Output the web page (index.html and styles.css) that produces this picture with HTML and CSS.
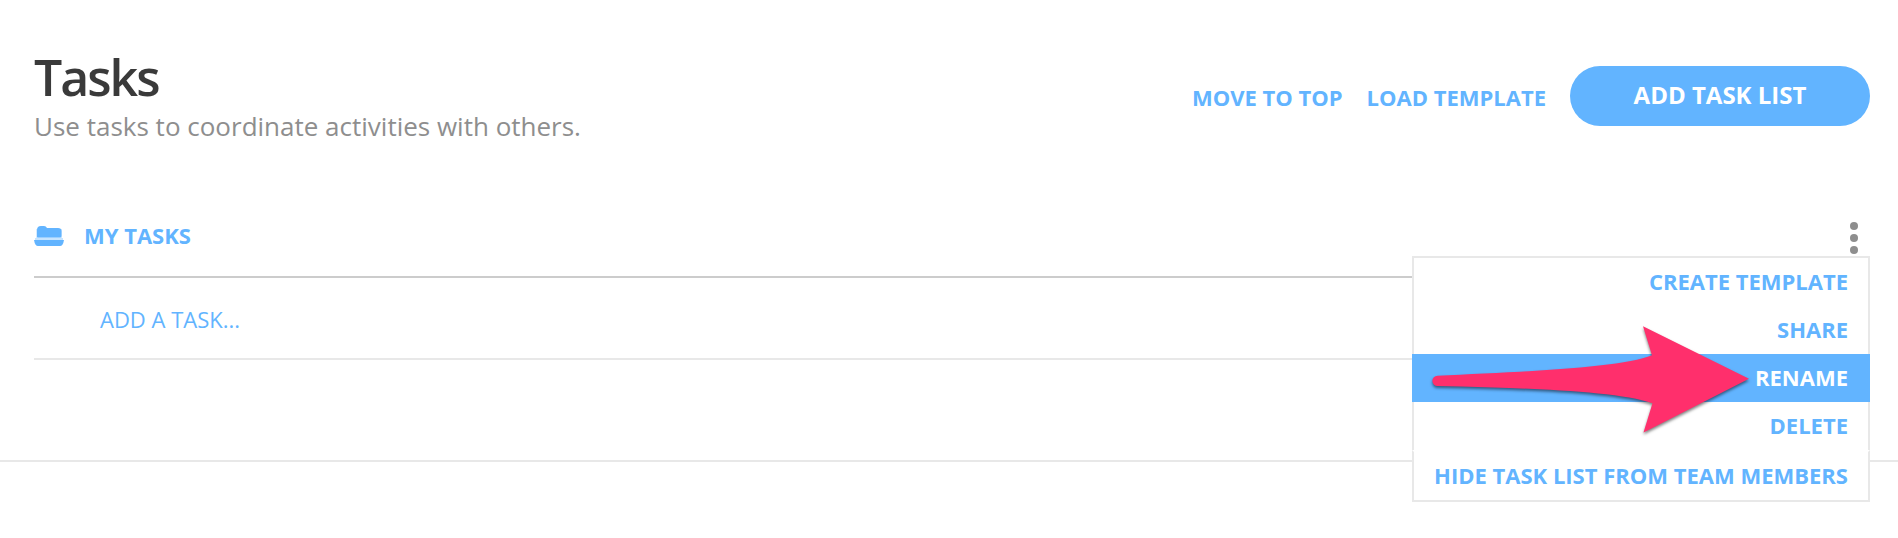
FILE: index.html
```html
<!DOCTYPE html>
<html lang="en">
<head>
<meta charset="utf-8">
<title>Tasks</title>
<link rel="stylesheet" href="styles.css">
</head>
<body>
<section class="tasks">
  <header class="header">
    <div>
      <h1 class="title">Tasks</h1>
      <p class="subtitle">Use tasks to coordinate activities with others.</p>
    </div>
    <nav class="actions">
      <a class="link">MOVE TO TOP</a>
      <a class="link">LOAD TEMPLATE</a>
      <button class="button">ADD TASK LIST</button>
    </nav>
  </header>
  <div class="list-head">
    <svg class="folder" width="30" height="20" viewBox="0 0 30 20">
      <path d="M2 3H28V12H2Z" fill="#d5ebff"/>
      <path d="M3 11V4Q3 0 7 0H10Q12 0 13 2H24Q27.500 2 27.500 5V10Q27.500 11.500 26 11.500H5Q3 11.500 3 11Z" fill="#62b4ff"/>
      <path d="M1 12H29V14H1Z" fill="#c6e4ff"/>
      <path d="M0 14H30Q29.500 17 28.500 18.500Q27.500 20 26 20H4Q2.500 20 1.500 18.500Q0.500 17 0 14Z" fill="#62b4ff"/>
    </svg>
    <span class="list-name">MY TASKS</span>
    <div class="more">
      <svg class="dots" width="8" height="32" viewBox="0 0 8 32" fill="#8e8e8e">
        <circle cx="4" cy="4" r="4"/><circle cx="4" cy="16" r="4"/><circle cx="4" cy="28" r="4"/>
      </svg>
      <ul class="menu">
        <li class="item">CREATE TEMPLATE</li>
        <li class="item">SHARE</li>
        <li class="item item-active">RENAME</li>
        <li class="item">DELETE</li>
        <li class="item item-last">HIDE TASK LIST FROM TEAM MEMBERS</li>
      </ul>
      <svg class="arrow" width="330" height="124" viewBox="0 0 330 124">
        <path d="M10.500 58.700C90 55 195 51 225 38.300L216 9.300L322 61.700L216.500 115.500L225.500 86.300C190 74 100 71 10.500 69A5 5 0 0 1 10.500 58.700Z" fill="#ff2f6c"/>
      </svg>
    </div>
  </div>
  <div class="add-task">ADD A TASK...</div>
</section>
</body>
</html>
```
FILE: styles.css
```css
* { box-sizing: border-box; }
body {
  margin: 0;
  height: 538px;
  overflow: hidden;
  background: #fff;
  font-family: "Open Sans", "Noto Sans", sans-serif;
}
.tasks {
  height: 462px;
  padding: 0 28px 0 34px;
  border-bottom: 2px solid #e8e8e8;
}
.header {
  display: flex;
  justify-content: space-between;
  height: 198px;
}
.title {
  margin: 47px 0 1px;
  font-size: 50px;
  font-weight: 600;
  line-height: 60px;
  letter-spacing: -2px;
  color: #3a3a3a;
}
.subtitle {
  margin: 0;
  font-size: 26px;
  line-height: 36px;
  color: #8e8e8e;
}
.actions {
  display: flex;
  align-items: center;
  height: 60px;
  margin-top: 66px;
  gap: 24px;
}
.link {
  padding-top: 2px;
  font-size: 22px;
  font-weight: 700;
  line-height: 30px;
  color: #62b4ff;
}
.button {
  width: 300px;
  height: 60px;
  padding: 0 0 3px;
  border: 0;
  border-radius: 30px;
  background: #62b4ff;
  color: #fff;
  font-family: inherit;
  font-size: 24px;
  font-weight: 700;
}
.list-head {
  display: flex;
  align-items: center;
  height: 80px;
  border-bottom: 2px solid #ccc;
}
.folder { margin-top: -2px; }
.list-name {
  flex: 1;
  margin-left: 20px;
  margin-top: -4px;
  font-size: 22px;
  font-weight: 700;
  line-height: 30px;
  color: #62b4ff;
}
.more {
  position: relative;
  height: 32px;
  margin: 2px 9px 0 0;
}
.dots { display: block; }
.menu {
  position: absolute;
  top: 34px;
  right: -9px;
  width: 458px;
  margin: 0;
  padding: 0;
  border-top: 2px solid #e8e8e8;
  background: #fff;
  list-style: none;
}
.more { margin-right: 12px; }
.menu { right: -12px; }
.item {
  height: 48px;
  padding: 0 20px;
  border: solid #e8e8e8;
  border-width: 0 2px;
  font-size: 22px;
  font-weight: 700;
  line-height: 46px;
  text-align: right;
  white-space: nowrap;
  color: #62b4ff;
}
.item-active {
  border-color: #62b4ff;
  background: #62b4ff;
  color: #fff;
}
.item-last {
  height: 52px;
  border-width: 2px;
  border-top-color: #fff;
}
.arrow {
  position: absolute;
  top: 95px;
  right: 101px;
  filter: drop-shadow(0 2px 1.500px rgba(0, 0, 0, 0.5));
}
.add-task {
  height: 82px;
  padding-left: 66px;
  border-bottom: 2px solid #e8e8e8;
  font-size: 22px;
  line-height: 82px;
  color: #62b4ff;
}
```
